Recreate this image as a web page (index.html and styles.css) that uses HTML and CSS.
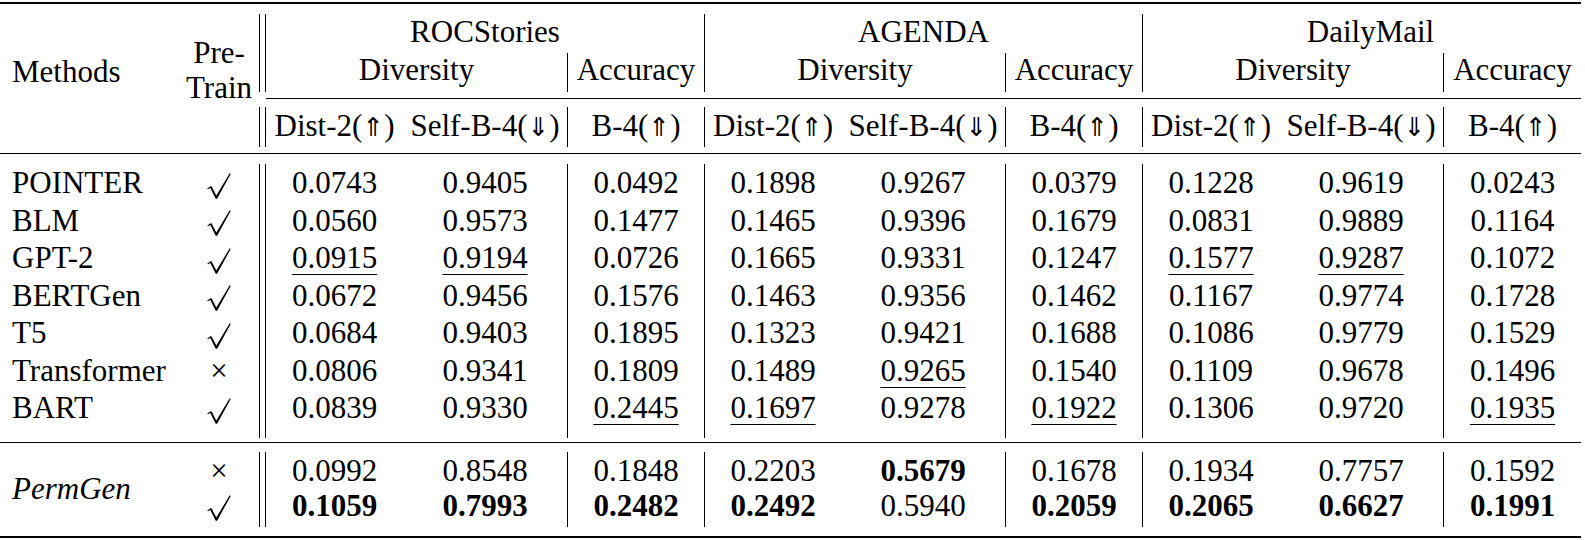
FILE: index.html
```html
<!DOCTYPE html>
<html>
<head>
<meta charset="utf-8">
<link rel="stylesheet" href="styles.css">
</head>
<body>
<table class="t">
  <colgroup>
    <col class="c-method"><col class="c-pre"><col class="c-dbl">
    <col class="c-dist"><col class="c-self"><col class="c-acc">
    <col class="c-dist"><col class="c-self"><col class="c-acc">
    <col class="c-dist"><col class="c-self"><col class="c-acc last">
  </colgroup>
  <tbody>
    <tr><td class="rl r-top" colspan="12"><div class="line thick"></div></td></tr>

    <tr class="h1">
      <td class="method-h" rowspan="4">Methods</td>
      <td class="pre-h" rowspan="4"><div>Pre-</div><div>Train</div></td>
      <td class="dbl"></td>
      <td colspan="3" class="ds">ROCStories</td>
      <td colspan="3" class="ds bl ds-ag">AGENDA</td>
      <td colspan="3" class="ds bl ds-dm">DailyMail</td>
    </tr>
    <tr class="h2">
      <td class="dbl"></td>
      <td colspan="2" class="dv">Diversity</td>
      <td class="bl">Accuracy</td>
      <td colspan="2" class="bl dv">Diversity</td>
      <td class="bl">Accuracy</td>
      <td colspan="2" class="bl dv">Diversity</td>
      <td class="bl">Accuracy</td>
    </tr>
    <tr>
      <td class="nb"></td>
      <td class="rl r-cmid" colspan="9"><div class="line"></div></td>
    </tr>
    <tr class="h3">
      <td class="dbl"></td>
      <td>Dist-2(<span class="ar">⇑</span>)</td><td>Self-B-4(<span class="ar">⇓</span>)</td><td class="bl">B-4(<span class="ar">⇑</span>)</td>
      <td class="bl">Dist-2(<span class="ar">⇑</span>)</td><td>Self-B-4(<span class="ar">⇓</span>)</td><td class="bl">B-4(<span class="ar">⇑</span>)</td>
      <td class="bl">Dist-2(<span class="ar">⇑</span>)</td><td>Self-B-4(<span class="ar">⇓</span>)</td><td class="bl">B-4(<span class="ar">⇑</span>)</td>
    </tr>
    <tr><td class="rl r-mid" colspan="12"><div class="line mid"></div></td></tr>

    <tr class="d">
      <td class="m">POINTER</td>
      <td class="p"><svg class="chk" viewBox="0 0 24 26" width="24" height="26"><polygon points="0.3,15.4 3.6,13.3 4.5,13.3 9.3,22.6 22.7,0.3 23.7,0.9 10.1,25.7 8.7,25.7 3.3,15 0.8,16.2"/></svg></td>
      <td class="dbl"></td>
      <td>0.0743</td><td>0.9405</td><td class="bl">0.0492</td>
      <td class="bl">0.1898</td><td>0.9267</td><td class="bl">0.0379</td>
      <td class="bl">0.1228</td><td>0.9619</td><td class="bl">0.0243</td>
    </tr>
    <tr class="d">
      <td class="m">BLM</td>
      <td class="p"><svg class="chk" viewBox="0 0 24 26" width="24" height="26"><polygon points="0.3,15.4 3.6,13.3 4.5,13.3 9.3,22.6 22.7,0.3 23.7,0.9 10.1,25.7 8.7,25.7 3.3,15 0.8,16.2"/></svg></td>
      <td class="dbl"></td>
      <td>0.0560</td><td>0.9573</td><td class="bl">0.1477</td>
      <td class="bl">0.1465</td><td>0.9396</td><td class="bl">0.1679</td>
      <td class="bl">0.0831</td><td>0.9889</td><td class="bl">0.1164</td>
    </tr>
    <tr class="d">
      <td class="m">GPT-2</td>
      <td class="p"><svg class="chk" viewBox="0 0 24 26" width="24" height="26"><polygon points="0.3,15.4 3.6,13.3 4.5,13.3 9.3,22.6 22.7,0.3 23.7,0.9 10.1,25.7 8.7,25.7 3.3,15 0.8,16.2"/></svg></td>
      <td class="dbl"></td>
      <td><span class="u">0.0915</span></td><td><span class="u">0.9194</span></td><td class="bl">0.0726</td>
      <td class="bl">0.1665</td><td>0.9331</td><td class="bl">0.1247</td>
      <td class="bl"><span class="u">0.1577</span></td><td><span class="u">0.9287</span></td><td class="bl">0.1072</td>
    </tr>
    <tr class="d">
      <td class="m">BERTGen</td>
      <td class="p"><svg class="chk" viewBox="0 0 24 26" width="24" height="26"><polygon points="0.3,15.4 3.6,13.3 4.5,13.3 9.3,22.6 22.7,0.3 23.7,0.9 10.1,25.7 8.7,25.7 3.3,15 0.8,16.2"/></svg></td>
      <td class="dbl"></td>
      <td>0.0672</td><td>0.9456</td><td class="bl">0.1576</td>
      <td class="bl">0.1463</td><td>0.9356</td><td class="bl">0.1462</td>
      <td class="bl">0.1167</td><td>0.9774</td><td class="bl">0.1728</td>
    </tr>
    <tr class="d">
      <td class="m">T5</td>
      <td class="p"><svg class="chk" viewBox="0 0 24 26" width="24" height="26"><polygon points="0.3,15.4 3.6,13.3 4.5,13.3 9.3,22.6 22.7,0.3 23.7,0.9 10.1,25.7 8.7,25.7 3.3,15 0.8,16.2"/></svg></td>
      <td class="dbl"></td>
      <td>0.0684</td><td>0.9403</td><td class="bl">0.1895</td>
      <td class="bl">0.1323</td><td>0.9421</td><td class="bl">0.1688</td>
      <td class="bl">0.1086</td><td>0.9779</td><td class="bl">0.1529</td>
    </tr>
    <tr class="d">
      <td class="m">Transformer</td>
      <td class="p">×</td>
      <td class="dbl"></td>
      <td>0.0806</td><td>0.9341</td><td class="bl">0.1809</td>
      <td class="bl">0.1489</td><td><span class="u">0.9265</span></td><td class="bl">0.1540</td>
      <td class="bl">0.1109</td><td>0.9678</td><td class="bl">0.1496</td>
    </tr>
    <tr class="d last">
      <td class="m">BART</td>
      <td class="p"><svg class="chk" viewBox="0 0 24 26" width="24" height="26"><polygon points="0.3,15.4 3.6,13.3 4.5,13.3 9.3,22.6 22.7,0.3 23.7,0.9 10.1,25.7 8.7,25.7 3.3,15 0.8,16.2"/></svg></td>
      <td class="dbl"></td>
      <td>0.0839</td><td>0.9330</td><td class="bl"><span class="u">0.2445</span></td>
      <td class="bl"><span class="u">0.1697</span></td><td>0.9278</td><td class="bl"><span class="u">0.1922</span></td>
      <td class="bl">0.1306</td><td>0.9720</td><td class="bl"><span class="u">0.1935</span></td>
    </tr>

    <tr><td class="rl r-mid2" colspan="12"><div class="line mid"></div></td></tr>

    <tr class="pg pg1">
      <td class="m pgname" rowspan="2">PermGen</td>
      <td class="p">×</td>
      <td class="dbl"></td>
      <td>0.0992</td><td>0.8548</td><td class="bl">0.1848</td>
      <td class="bl">0.2203</td><td class="b">0.5679</td><td class="bl">0.1678</td>
      <td class="bl">0.1934</td><td>0.7757</td><td class="bl">0.1592</td>
    </tr>
    <tr class="pg pg2">
      <td class="p"><svg class="chk" viewBox="0 0 24 26" width="24" height="26"><polygon points="0.3,15.4 3.6,13.3 4.5,13.3 9.3,22.6 22.7,0.3 23.7,0.9 10.1,25.7 8.7,25.7 3.3,15 0.8,16.2"/></svg></td>
      <td class="dbl"></td>
      <td class="b">0.1059</td><td class="b">0.7993</td><td class="bl b">0.2482</td>
      <td class="bl b">0.2492</td><td>0.5940</td><td class="bl b">0.2059</td>
      <td class="bl b">0.2065</td><td class="b">0.6627</td><td class="bl b">0.1991</td>
    </tr>

    <tr><td class="rl r-bot" colspan="12"><div class="line thick"></div></td></tr>
  </tbody>
</table>
</body>
</html>
```

FILE: styles.css
```css
html, body {
  margin: 0;
  padding: 0;
  background: #fff;
}
body {
  font-family: "Liberation Serif", serif;
  font-size: 31px;
  color: #000;
}
.t {
  border-collapse: separate;
  border-spacing: 0;
  table-layout: fixed;
  width: 1581px;
}
.c-method { width: 179px; }
.c-pre { width: 80px; }
.c-dbl { width: 7px; }
.c-dist { width: 137px; }
.c-self { width: 164px; }
.c-acc { width: 137px; }
.c-acc.last { width: 138px; }

td {
  padding: 0;
  text-align: center;
  white-space: nowrap;
  vertical-align: middle;
  box-sizing: border-box;
}

/* rules */
.rl { line-height: 0; font-size: 0; vertical-align: top; }
.line { height: 1px; background: #000; }
.line.thick { height: 2px; }
.line.mid { height: 1px; }
.r-top { padding: 2px 0 10px; }
.r-cmid { padding: 6px 0 8px; }
.r-mid { padding: 6px 0 10px; }
.r-mid2 { padding: 4px 0 9px; }
.r-bot { padding: 9px 0 2px; }

/* vertical bars */
.dbl { border-left: 1px solid #000; border-right: 1px solid #000; }
.nb { border: 0; }
.bl { border-left: 1px solid #000; }

/* header */
.h1 td, .h2 td, .h3 td { line-height: 30px; }
.h1 td { height: 39px; padding-bottom: 4px; }
.h2 td { height: 39px; padding-bottom: 5px; }
.h3 td { height: 40px; padding-bottom: 2px; }
.h1 td.ds-dm { padding-left: 17px; }
.h1 td.method-h,
.h1 td.pre-h { height: auto; vertical-align: top; padding-bottom: 0; }
.h1 td.method-h {
  text-align: left;
  padding-left: 12px;
  padding-top: 40px;
  line-height: 36px;
}
.h1 td.pre-h {
  padding-top: 21px;
  line-height: 35px;
}
.ar {
  font-family: "DejaVu Sans", sans-serif;
  font-size: 26px;
}

/* data rows */
.d td, .pg td { vertical-align: top; }
.d td { line-height: 37.5px; }
.d.last td { padding-bottom: 11.5px; }
.pg td { line-height: 34.5px; }
.pg1 td { padding-top: 2px; }
.pg2 td { padding-bottom: 4px; }
.pg td.pgname { vertical-align: middle; padding: 0 0 0 12px; }
.m { text-align: left; padding-left: 12px; }
.pgname { font-style: italic; }
.chk { vertical-align: middle; fill: #000; }
.b { font-weight: bold; }
.u {
  text-decoration: underline;
  text-decoration-thickness: 1px;
  text-underline-offset: 6px;
}
```
